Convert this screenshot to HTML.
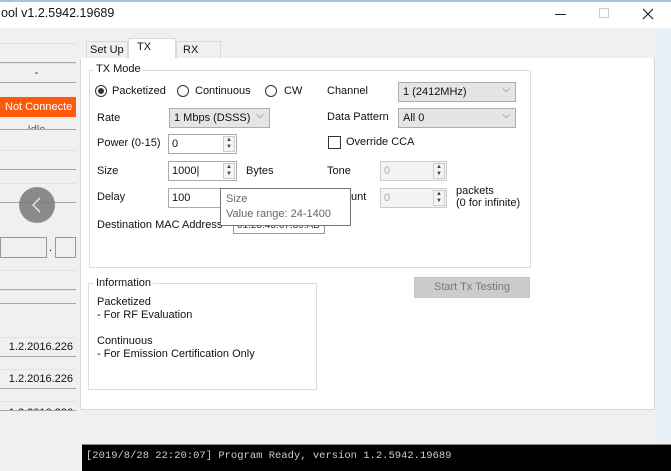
<!DOCTYPE html>
<html><head><style>
*{margin:0;padding:0;box-sizing:border-box}
body{width:671px;height:471px;overflow:hidden;background:#f0f0f0;font-family:"Liberation Sans",sans-serif;font-size:11px;color:#111;position:relative}
.a{position:absolute}
.fld{position:absolute;left:0;width:76px;height:20px;background:#f0f0f0;border-top:1px solid #e2e2e2;border-bottom:1px solid #a8a8a8;text-align:right;padding-right:3px;line-height:18px}
.sel{position:absolute;height:20px;background:#e5e5e5;border:1px solid #adadad;padding-left:4px;line-height:18px}
.sel:after{content:"⌵";position:absolute;right:5px;top:-2px;color:#666;font-size:10px}
.spin{position:absolute;height:20px;background:#fff;border:1px solid #aaa;padding-left:3px;line-height:18px}
.spin i{position:absolute;right:1px;top:1px;width:12px;height:16px;border:1px solid #ccc;background:#f4f4f4;font-style:normal;font-size:6px;line-height:7px;text-align:center;color:#444}
.dis{background:#f4f4f4;color:#aaa;border-color:#ccc}
.rad{position:absolute;width:12px;height:12px;border:1px solid #333;border-radius:50%;background:#fff}
</style></head><body>
<div class="a" style="left:0;top:0;width:671px;height:28px;background:#fff"></div>
<div class="a" style="left:0;top:0;width:671px;height:2px;background:#a9c4dc"></div>
<div class="a" style="left:1px;top:6px;font-size:12.5px">ool v1.2.5942.19689</div>
<div class="a" style="left:555px;top:14px;width:11px;height:1px;background:#222"></div>
<div class="a" style="left:599px;top:8px;width:10px;height:10px;border:1px solid #ccc"></div>
<svg class="a" style="left:642px;top:8px" width="12" height="12"><path d="M1 1L11 11M11 1L1 11" stroke="#222" stroke-width="1.2"/></svg>
<div class="a" style="left:656px;top:28px;width:15px;height:443px;background:#e8f1f8"></div>

<div class="fld" style="top:43px"></div>
<div class="fld" style="top:63px;text-align:center">-</div>
<div class="a" style="left:0;top:97px;width:76px;height:20px;background:#ff5a0a;color:#fff;line-height:20px;padding-left:5px;white-space:nowrap;overflow:hidden">Not Connecte</div>
<div class="fld" style="top:117px;height:13px;line-height:24px;text-align:center;overflow:hidden;color:#555">Idle</div>
<div class="fld" style="top:150px"></div>
<div class="fld" style="top:183px"></div>
<div class="a" style="left:0;top:237px;width:47px;height:21px;border:1px solid #999;background:#f0f0f0"></div>
<div class="a" style="left:49px;top:242px">.</div>
<div class="a" style="left:55px;top:237px;width:21px;height:21px;border:1px solid #999;background:#f0f0f0"></div>
<div class="fld" style="top:270px"></div>
<div class="fld" style="top:290px;height:14px"></div>
<div class="fld" style="top:337px">1.2.2016.226</div>
<div class="fld" style="top:369px">1.2.2016.226</div>
<div class="fld" style="top:401px;height:10px;overflow:hidden;line-height:22px">1.2.2016.226</div>
<div class="a" style="left:19px;top:187px;width:36px;height:36px;border-radius:50%;background:rgba(120,120,120,.85)"></div>
<svg class="a" style="left:19px;top:187px" width="36" height="36"><path d="M21 11L14 18L21 25" stroke="#eee" stroke-width="1.3" fill="none"/></svg>

<div class="a" style="left:86px;top:41px;width:42px;height:18px;border:1px solid #d9d9d9;background:#f0f0f0;padding-left:3px;line-height:16px">Set Up</div>
<div class="a" style="left:128px;top:38px;width:48px;height:21px;background:#fff;border:1px solid #d9d9d9;border-bottom:none;padding-left:8px;line-height:16px">TX</div>
<div class="a" style="left:176px;top:41px;width:45px;height:18px;border:1px solid #d9d9d9;background:#f0f0f0;padding-left:6px;line-height:16px">RX</div>
<div class="a" style="left:80px;top:58px;width:575px;height:352px;background:#fff;border:1px solid #d9d9d9;border-top:none"></div>

<div class="a" style="left:89px;top:70px;width:442px;height:198px;border:1px solid #dcdcdc"></div>
<div class="a" style="left:94px;top:63px;background:#fff;padding:0 2px">TX Mode</div>
<div class="rad" style="left:95px;top:85px"><div class="a" style="left:2px;top:2px;width:6px;height:6px;border-radius:50%;background:#333"></div></div>
<div class="a" style="left:112px;top:85px">Packetized</div>
<div class="rad" style="left:177px;top:85px"></div><div class="a" style="left:195px;top:85px">Continuous</div>
<div class="rad" style="left:265px;top:85px"></div><div class="a" style="left:284px;top:85px">CW</div>
<div class="a" style="left:97px;top:112px">Rate</div>
<div class="sel" style="left:169px;top:108px;width:101px">1 Mbps (DSSS)</div>
<div class="a" style="left:97px;top:137px">Power (0-15)</div>
<div class="spin" style="left:168px;top:134px;width:69px">0<i>▲<br>▼</i></div>
<div class="a" style="left:97px;top:165px">Size</div>
<div class="spin" style="left:168px;top:161px;width:69px">1000|<i>▲<br>▼</i></div>
<div class="a" style="left:246px;top:165px">Bytes</div>
<div class="a" style="left:97px;top:191px">Delay</div>
<div class="spin" style="left:168px;top:188px;width:69px">100</div>
<div class="a" style="left:97px;top:219px">Destination MAC Address</div>
<div class="a" style="left:233px;top:216px;width:92px;height:18px;border:1px solid #999;font-size:10px;padding-left:3px;line-height:18px;overflow:hidden;color:#333">01:23:45:67:89:AB</div>

<div class="a" style="left:327px;top:85px">Channel</div>
<div class="sel" style="left:398px;top:82px;width:118px">1 (2412MHz)</div>
<div class="a" style="left:327px;top:111px">Data Pattern</div>
<div class="sel" style="left:398px;top:108px;width:118px">All 0</div>
<div class="a" style="left:328px;top:136px;width:13px;height:13px;border:1px solid #333;background:#fff"></div>
<div class="a" style="left:346px;top:136px">Override CCA</div>
<div class="a" style="left:327px;top:165px">Tone</div>
<div class="spin dis" style="left:380px;top:161px;width:67px">0<i>▲<br>▼</i></div>
<div class="a" style="left:337px;top:191px">Count</div>
<div class="spin dis" style="left:380px;top:188px;width:67px">0<i>▲<br>▼</i></div>
<div class="a" style="left:456px;top:185px;line-height:12px">packets<br>(0 for infinite)</div>

<div class="a" style="left:220px;top:188px;width:131px;height:38px;background:#fff;border:1px solid #767676;color:#666;padding:3px 5px;line-height:15px">Size<br>Value range: 24-1400</div>

<div class="a" style="left:88px;top:283px;width:229px;height:107px;border:1px solid #dcdcdc"></div>
<div class="a" style="left:94px;top:277px;background:#fff;padding:0 2px">Information</div>
<div class="a" style="left:97px;top:296px;line-height:13px">Packetized<br>- For RF Evaluation<br><br>Continuous<br>- For Emission Certification Only</div>
<div class="a" style="left:414px;top:277px;width:116px;height:21px;background:#ccc;border:1px solid #c4c4c4;color:#777;text-align:center;line-height:19px">Start Tx Testing</div>

<div class="a" style="left:82px;top:444px;width:589px;height:27px;background:#000;border-top:1px solid #888;color:#ccc;font-family:'Liberation Mono',monospace;font-size:10.5px;padding:5px 0 0 4px">[2019/8/28 22:20:07] Program Ready, version 1.2.5942.19689</div>
</body></html>
